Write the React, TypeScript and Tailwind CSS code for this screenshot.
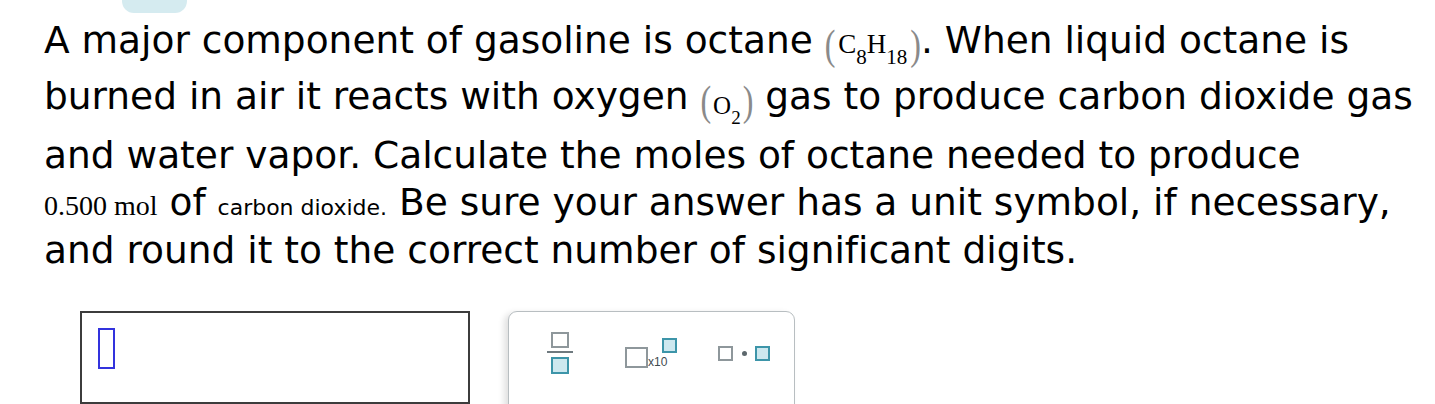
export default function App() {
  const sans = { fontFamily: '"DejaVu Sans", Verdana, sans-serif' };
  return (
    <div className="w-[1435px] h-[404px] overflow-hidden bg-white text-black" style={sans}>
      <div className="ml-[122px] w-[65px] h-[13px] rounded-b-[12px] bg-[#d5ebf0]" />

      <div className="mt-[3px] pl-[44px] text-[37.5px] leading-[48px] whitespace-nowrap [font-variant-ligatures:none]">
        <div className="h-[56px]">
          A major component of gasoline is octane <Chem kind="octane" />. When liquid octane is
        </div>
        <div className="h-[59px]">
          burned in air it reacts with oxygen <Chem kind="oxygen" /> gas to produce carbon dioxide gas
        </div>
        <div className="h-[47px]">and water vapor. Calculate the moles of octane needed to produce</div>
        <div className="h-[48px]">
          <span className="font-['Liberation_Serif',serif] text-[28px]">0.500 mol</span> of{' '}
          <span className="text-[22px]">carbon dioxide.</span> Be sure your answer has a unit symbol, if
          necessary,
        </div>
        <div className="h-[48px]">and round it to the correct number of significant digits.</div>
      </div>

      <div className="mt-[37px] flex items-start">
        <div className="ml-[80px] w-[390px] h-[93px] border-2 border-[#3c3c3c] pl-[16px] pt-[15px]">
          <div className="w-[17px] h-[41px] border-2 border-[#3333dd]" />
        </div>

        <div className="ml-[38px] w-[287px] h-[130px] rounded-[9px] border border-[#b8bec1] bg-white shadow-[-4px_2px_6px_rgba(0,0,0,0.12)] flex items-start pl-[38px] pt-[20px]">
          <div className="flex flex-col items-center w-[26px]">
            <div className="w-[18px] h-[16px] border-2 border-[#8e979b]" />
            <div className="mt-[3px] w-[26px] h-[2px] bg-[#6f7a7f]" />
            <div className="mt-[4px] w-[18px] h-[17px] border-2 border-[#3d95a9] bg-[#cde8ef]" />
          </div>

          <div className="ml-[52px] mt-[6px] flex items-start">
            <div className="mt-[9px] w-[23px] h-[21px] border-2 border-[#8e979b]" />
            <span className="mt-[17px] text-[12px] leading-[14px] text-[#3f4a4f] font-['Liberation_Sans',sans-serif]">
              x10
            </span>
            <div className="-ml-[5px] w-[15px] h-[15px] border-2 border-[#3d95a9] bg-[#cde8ef]" />
          </div>

          <div className="ml-[41px] mt-[14px] flex items-center">
            <div className="w-[15px] h-[15px] border-2 border-[#8e979b]" />
            <div className="ml-[9px] w-[5px] h-[5px] rounded-full bg-[#5d686d]" />
            <div className="ml-[8px] w-[15px] h-[15px] border-2 border-[#3d95a9] bg-[#cde8ef]" />
          </div>
        </div>
      </div>
    </div>
  );
}

function Chem({ kind }: { kind: 'octane' | 'oxygen' }) {
  const paren =
    'inline-block text-[32px] leading-none text-[#8a8a8a] scale-y-[1.3] translate-y-[3px]';
  return (
    <span className="font-['Liberation_Serif',serif] leading-none">
      <span className={paren}>(</span>
      {kind === 'octane' ? (
        <span className="text-[27px] px-[3px]">
          C<sub className="text-[21px] align-[-6px]">8</sub>H<sub className="text-[21px] align-[-6px]">18</sub>
        </span>
      ) : (
        <span className="text-[25px] px-[2px] relative top-[5px]">
          O<sub className="text-[19px] align-[-5px]">2</sub>
        </span>
      )}
      <span className={paren}>)</span>
    </span>
  );
}
